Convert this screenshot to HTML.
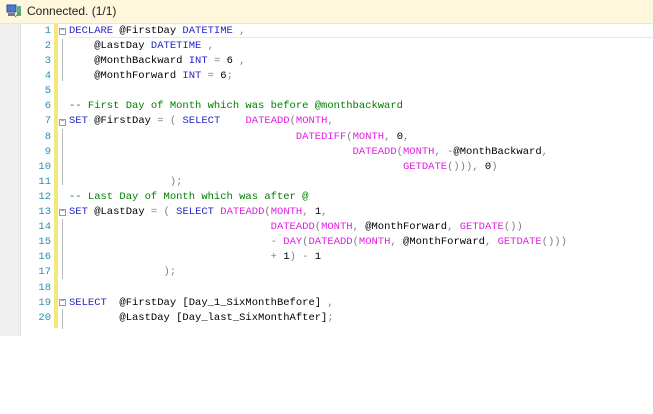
<!DOCTYPE html>
<html><head><style>
body{margin:0;width:653px;height:414px;background:#fff;position:relative;overflow:hidden;font-family:"Liberation Mono",monospace;}
#bar{position:absolute;left:0;top:0;width:653px;height:23px;background:#fff7dc;border-bottom:1px solid #e4e4e4;}
#bar span{position:absolute;left:27px;top:4px;font:12px "Liberation Sans",sans-serif;color:#222;}
#gut{position:absolute;left:0;top:24px;width:20px;height:312px;background:#f0f0f0;border-right:1px solid #e0e0e0;}
#chg{position:absolute;left:54px;top:24px;width:4px;height:304px;background:#f2e97a;}
#hl{position:absolute;left:69px;top:37px;width:584px;height:1px;background:#e8e8f0;}
.l{position:absolute;left:0;height:15px;font-size:10.5px;line-height:15px;white-space:pre;margin-top:2px}
.n{position:absolute;width:51px;text-align:right;color:#2b91af;}
.c{position:absolute;left:69px;color:#000;}
.k{color:#2424c8}.f{color:#e020e0}.g{color:#008000}.o{color:#808080}
.fold{position:absolute;left:59px;width:7px;height:7px;border:1px solid #999;box-sizing:border-box;font-size:7px;line-height:5px;text-align:center;color:#555;background:#fff}
.vl{position:absolute;left:62px;width:1px;background:#bbb}
</style></head><body>
<div id="bar"><svg style="position:absolute;left:6px;top:4px" width="16" height="15"><rect x="1" y="1" width="9" height="7" fill="#4a7bd0" stroke="#2a4a90"/><rect x="2" y="9" width="7" height="3" fill="#778"/><rect x="11" y="2" width="4" height="10" fill="#6a8"/><path d="M9 13 L13 9 L15 11" stroke="#3a3" fill="none"/></svg><span>Connected. (1/1)</span></div>
<div id="gut"></div><div id="chg"></div><div id="hl"></div>
<div class="vl" style="top:39px;height:42px"></div>
<div class="vl" style="top:129px;height:56px"></div>
<div class="vl" style="top:219px;height:60px"></div>
<div class="vl" style="top:309px;height:20px"></div>
<div class="fold" style="top:28px">−</div>
<div class="fold" style="top:119px">−</div>
<div class="fold" style="top:209px">−</div>
<div class="fold" style="top:299px">−</div>
<div class="l" style="top:22px"><span class="n">1</span><span class="c"><span class="k">DECLARE</span> @FirstDay <span class="k">DATETIME</span> <span class="o">,</span></span></div>
<div class="l" style="top:37px"><span class="n">2</span><span class="c">    @LastDay <span class="k">DATETIME</span> <span class="o">,</span></span></div>
<div class="l" style="top:52px"><span class="n">3</span><span class="c">    @MonthBackward <span class="k">INT</span> <span class="o">=</span> 6 <span class="o">,</span></span></div>
<div class="l" style="top:67px"><span class="n">4</span><span class="c">    @MonthForward <span class="k">INT</span> <span class="o">=</span> 6<span class="o">;</span></span></div>
<div class="l" style="top:82px"><span class="n">5</span></div>
<div class="l" style="top:97px"><span class="n">6</span><span class="c g">-- First Day of Month which was before @monthbackward</span></div>
<div class="l" style="top:112px"><span class="n">7</span><span class="c"><span class="k">SET</span> @FirstDay <span class="o">=</span> <span class="o">(</span> <span class="k">SELECT</span>    <span class="f">DATEADD</span><span class="o">(</span><span class="f">MONTH</span><span class="o">,</span></span></div>
<div class="l" style="top:128px"><span class="n">8</span><span class="c">                                    <span class="f">DATEDIFF</span><span class="o">(</span><span class="f">MONTH</span><span class="o">,</span> 0<span class="o">,</span></span></div>
<div class="l" style="top:143px"><span class="n">9</span><span class="c">                                             <span class="f">DATEADD</span><span class="o">(</span><span class="f">MONTH</span><span class="o">,</span> <span class="o">-</span>@MonthBackward<span class="o">,</span></span></div>
<div class="l" style="top:158px"><span class="n">10</span><span class="c">                                                     <span class="f">GETDATE</span><span class="o">())),</span> 0<span class="o">)</span></span></div>
<div class="l" style="top:173px"><span class="n">11</span><span class="c">                <span class="o">);</span></span></div>
<div class="l" style="top:188px"><span class="n">12</span><span class="c g">-- Last Day of Month which was after @</span></div>
<div class="l" style="top:203px"><span class="n">13</span><span class="c"><span class="k">SET</span> @LastDay <span class="o">=</span> <span class="o">(</span> <span class="k">SELECT</span> <span class="f">DATEADD</span><span class="o">(</span><span class="f">MONTH</span><span class="o">,</span> 1<span class="o">,</span></span></div>
<div class="l" style="top:218px"><span class="n">14</span><span class="c">                                <span class="f">DATEADD</span><span class="o">(</span><span class="f">MONTH</span><span class="o">,</span> @MonthForward<span class="o">,</span> <span class="f">GETDATE</span><span class="o">())</span></span></div>
<div class="l" style="top:233px"><span class="n">15</span><span class="c">                                <span class="o">-</span> <span class="f">DAY</span><span class="o">(</span><span class="f">DATEADD</span><span class="o">(</span><span class="f">MONTH</span><span class="o">,</span> @MonthForward<span class="o">,</span> <span class="f">GETDATE</span><span class="o">()))</span></span></div>
<div class="l" style="top:248px"><span class="n">16</span><span class="c">                                <span class="o">+</span> 1<span class="o">)</span> <span class="o">-</span> 1</span></div>
<div class="l" style="top:263px"><span class="n">17</span><span class="c">               <span class="o">);</span></span></div>
<div class="l" style="top:279px"><span class="n">18</span></div>
<div class="l" style="top:294px"><span class="n">19</span><span class="c"><span class="k">SELECT</span>  @FirstDay [Day_1_SixMonthBefore] <span class="o">,</span></span></div>
<div class="l" style="top:309px"><span class="n">20</span><span class="c">        @LastDay [Day_last_SixMonthAfter]<span class="o">;</span></span></div>
</body></html>
